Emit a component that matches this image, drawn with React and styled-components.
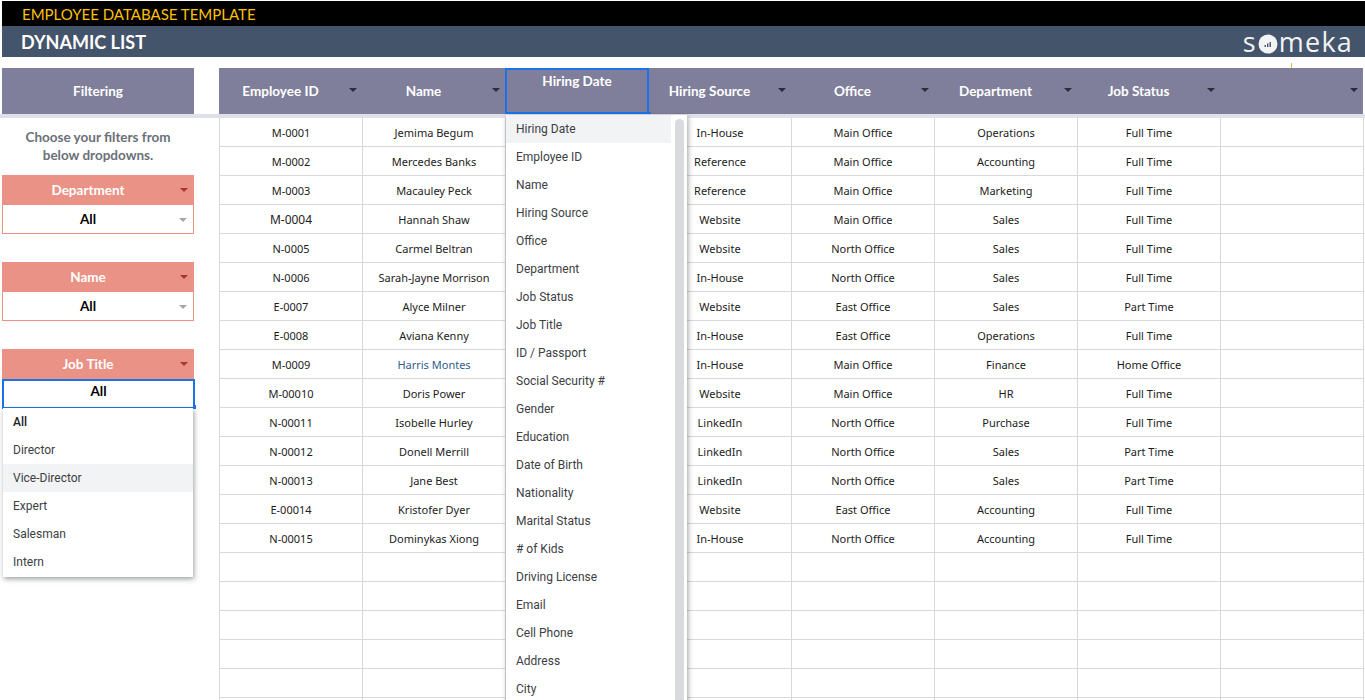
import React from "react";
import styled, { createGlobalStyle } from "styled-components";

const Global = createGlobalStyle`
  html, body { margin: 0; padding: 0; background: #fff; overflow: hidden; }
  #root { width: 1365px; height: 700px; overflow: hidden; }
`;

const Page = styled.div`
  position: relative;
  width: 1365px;
  height: 700px;
  overflow: hidden;
  padding-top: 1px;
  box-sizing: border-box;
  background: #fff;
  font-family: "Noto Sans", sans-serif;
`;
const TitleBar = styled.div`
  height: 25px;
  margin-left: 2px;
  padding-left: 20px;
  background: #000;
  color: #ffc000;
  font: 400 15px/27px Lato, sans-serif;
`;
const SubBar = styled.div`
  height: 31px;
  margin-left: 2px;
  padding: 0 12px 0 19px;
  background: #44546a;
  display: flex;
  align-items: center;
  justify-content: space-between;
`;
const SubTitle = styled.div`
  color: #fff;
  font: 700 18px/32px Lato, sans-serif;
`;
const Logo = styled.div`
  display: flex;
  align-items: center;
  color: #f2f3f5;
  font: 400 27px/30px "Open Sans", sans-serif;
  letter-spacing: 1.2px;
  svg { margin: 4px 1px 0 1px; }
`;
const Gap = styled.div`
  height: 11px;
  position: relative;
`;
const Tick = styled.i`
  position: absolute;
  left: 1291px;
  top: 6px;
  width: 1px;
  height: 5px;
  background: #f0b35a;
`;
const HeaderRow = styled.div`
  display: flex;
  height: 46px;
  padding-left: 2px;
  border-bottom: 4px solid #dfe0ea;
`;
const FilterHead = styled.div`
  width: 192px;
  margin-right: 25px;
  background: #7f7f9b;
  color: #fff;
  font: 700 13.5px/46px Lato, sans-serif;
  text-align: center;
`;
const Heads = styled.div`
  display: grid;
  grid-template-columns: repeat(8, 143px);
  width: 1144px;
  background: #7f7f9b;
`;
const Head = styled.div`
  position: relative;
  color: #fff;
  font: 700 13.5px/46px Lato, sans-serif;
  text-align: center;
  padding-right: 20px;
`;
const SelectedHead = styled.div`
  position: relative;
  box-sizing: border-box;
  color: #fff;
  font: 700 13.5px/20px Lato, sans-serif;
  text-align: center;
  border: 2px solid #1a73e8;
  margin-left: 0;
  padding-top: 1px;
  width: 144px;
  height: 46px;
`;
const Handle = styled.i`
  position: absolute;
  right: -4px;
  bottom: -2px;
  width: 3px;
  height: 2px;
  background: #1a73e8;
`;
const Arrow = styled.i`
  position: absolute;
  right: ${(p) => p.$right}px;
  top: ${(p) => p.$top}px;
  width: 0;
  height: 0;
  border-left: 4.5px solid transparent;
  border-right: 4.5px solid transparent;
  border-top: 4.5px solid ${(p) => p.$color};
`;
const Body = styled.div`
  display: flex;
  padding-left: 2px;
`;
const Sidebar = styled.aside`
  width: 192px;
  margin-right: 25px;
`;
const Intro = styled.div`
  height: 57px;
  box-sizing: border-box;
  padding-top: 10px;
  text-align: center;
  color: #6b7078;
  font: 700 13.5px/18px Lato, sans-serif;
`;
const FilterGroup = styled.div`
  margin-bottom: 28px;
  position: relative;
`;
const FilterLabel = styled.div`
  position: relative;
  height: 30px;
  background: #ea9285;
  color: #fff;
  font: 700 13.5px/30px Lato, sans-serif;
  text-align: center;
  padding-right: 20px;
`;
const FilterValue = styled.div`
  position: relative;
  height: 29px;
  box-sizing: border-box;
  border: 1px solid #ea9285;
  border-top: none;
  background: #fff;
  color: #000;
  font: 700 13.5px/28px Lato, sans-serif;
  text-align: center;
  padding-right: 20px;
`;
const FilterSelected = styled.div`
  position: relative;
  width: 193px;
  height: 30px;
  box-sizing: border-box;
  border: 2px solid #1a73e8;
  background: #fff;
  color: #000;
  font: 700 13.5px/21px Lato, sans-serif;
  text-align: center;
`;
const SmallHandle = styled.i`
  position: absolute;
  right: -3px;
  bottom: -2px;
  width: 3px;
  height: 4px;
  background: #1a73e8;
`;
const Table = styled.div`
  display: grid;
  grid-template-columns: repeat(8, 143px);
  grid-auto-rows: 29px;
  width: 1145px;
  border-left: 1px solid #d9d9d9;
  margin-left: 0;
`;
const Cell = styled.div`
  box-sizing: border-box;
  border-right: 1px solid #d9d9d9;
  border-bottom: 1px solid #d9d9d9;
  text-align: center;
  color: ${(p) => (p.$link ? "#2f5d8a" : "#1c1c1c")};
  font: 400 ${(p) => (p.$big ? 12 : 11)}px/29px "Noto Sans", sans-serif;
  white-space: nowrap;
  overflow: hidden;
`;
const Menu = styled.div`
  position: absolute;
  background: #fff;
  box-shadow: 1px 2px 5px rgba(60, 64, 67, 0.5);
  font: 400 12px/28px Roboto, sans-serif;
  color: #3c4043;
  overflow: hidden;
`;
const JobMenu = styled(Menu)`
  left: 3px;
  top: 408px;
  width: 190px;
  height: 169px;
`;
const ColumnMenu = styled(Menu)`
  left: 506px;
  top: 115px;
  width: 181px;
  height: 600px;
`;
const MenuItem = styled.div`
  height: 28px;
  padding-left: ${(p) => p.$pad}px;
  width: ${(p) => p.$w}px;
  box-sizing: border-box;
  background: ${(p) => (p.$hover ? "#f1f3f4" : "transparent")};
  font-weight: ${(p) => (p.$strong ? 500 : 400)};
  color: ${(p) => (p.$strong ? "#202124" : "#3c4043")};
`;
const ScrollBar = styled.div`
  position: absolute;
  left: 169px;
  top: 4px;
  width: 9px;
  height: 620px;
  border-radius: 5px;
  background: #d9dade;
`;

const rows = [
  ["M-0001", "Jemima Begum", "In-House", "Main Office", "Operations", "Full Time"],
  ["M-0002", "Mercedes Banks", "Reference", "Main Office", "Accounting", "Full Time"],
  ["M-0003", "Macauley Peck", "Reference", "Main Office", "Marketing", "Full Time"],
  ["M-0004", "Hannah Shaw", "Website", "Main Office", "Sales", "Full Time"],
  ["N-0005", "Carmel Beltran", "Website", "North Office", "Sales", "Full Time"],
  ["N-0006", "Sarah-Jayne Morrison", "In-House", "North Office", "Sales", "Full Time"],
  ["E-0007", "Alyce Milner", "Website", "East Office", "Sales", "Part Time"],
  ["E-0008", "Aviana Kenny", "In-House", "East Office", "Operations", "Full Time"],
  ["M-0009", "Harris Montes", "In-House", "Main Office", "Finance", "Home Office"],
  ["M-00010", "Doris Power", "Website", "Main Office", "HR", "Full Time"],
  ["N-00011", "Isobelle Hurley", "LinkedIn", "North Office", "Purchase", "Full Time"],
  ["N-00012", "Donell Merrill", "LinkedIn", "North Office", "Sales", "Part Time"],
  ["N-00013", "Jane Best", "LinkedIn", "North Office", "Sales", "Part Time"],
  ["E-00014", "Kristofer Dyer", "Website", "East Office", "Accounting", "Full Time"],
  ["N-00015", "Dominykas Xiong", "In-House", "North Office", "Accounting", "Full Time"],
  ...Array.from({ length: 6 }, () => ["", "", "", "", "", ""]),
];

const headers = ["Employee ID", "Name", null, "Hiring Source", "Office", "Department", "Job Status", ""];
const jobTitles = ["All", "Director", "Vice-Director", "Expert", "Salesman", "Intern"];
const columns = [
  "Hiring Date", "Employee ID", "Name", "Hiring Source", "Office", "Department", "Job Status",
  "Job Title", "ID / Passport", "Social Security #", "Gender", "Education", "Date of Birth",
  "Nationality", "Marital Status", "# of Kids", "Driving License", "Email", "Cell Phone", "Address", "City", "State",
];

const LogoO = () => (
  <svg width="20" height="20" viewBox="0 0 20 20">
    <circle cx="10" cy="10" r="9.5" fill="#f2f3f5" />
    <rect x="6.5" y="11" width="1.4" height="2" fill="#44546a" />
    <rect x="9" y="9.5" width="1.4" height="3.5" fill="#44546a" />
    <rect x="11.5" y="8" width="1.4" height="5" fill="#44546a" />
  </svg>
);

const Filter = ({ label }) => (
  <FilterGroup>
    <FilterLabel>
      {label}
      <Arrow $right={6} $top={13} $color="#a5382c" />
    </FilterLabel>
    <FilterValue>
      All
      <Arrow $right={6} $top={13} $color="#a6a6a6" />
    </FilterValue>
  </FilterGroup>
);

export default function App() {
  return (
    <Page>
      <Global />
      <TitleBar>EMPLOYEE DATABASE TEMPLATE</TitleBar>
      <SubBar>
        <SubTitle>DYNAMIC LIST</SubTitle>
        <Logo>
          s<LogoO />meka
        </Logo>
      </SubBar>
      <Gap>
        <Tick />
      </Gap>
      <HeaderRow>
        <FilterHead>Filtering</FilterHead>
        <Heads>
          {headers.map((h, i) =>
            h === null ? (
              <SelectedHead key={i}>
                Hiring Date
                <Handle />
              </SelectedHead>
            ) : (
              <Head key={i}>
                {h}
                <Arrow $right={5} $top={20} $color="#2b2b3a" />
              </Head>
            )
          )}
        </Heads>
      </HeaderRow>
      <Body>
        <Sidebar>
          <Intro>
            Choose your filters from
            <br />
            below dropdowns.
          </Intro>
          <Filter label="Department" />
          <Filter label="Name" />
          <FilterGroup>
            <FilterLabel>
              Job Title
              <Arrow $right={6} $top={13} $color="#a5382c" />
            </FilterLabel>
            <FilterSelected>
              All
              <SmallHandle />
            </FilterSelected>
          </FilterGroup>
        </Sidebar>
        <Table>
          {rows.flatMap((r, i) => {
            const cells = [r[0], r[1], "", r[2], r[3], r[4], r[5], ""];
            return cells.map((c, j) => (
              <Cell key={`${i}-${j}`} $link={c === "Harris Montes"} $big={c === "M-0004"}>
                {c}
              </Cell>
            ));
          })}
        </Table>
      </Body>
      <JobMenu>
        {jobTitles.map((t, i) => (
          <MenuItem key={t} $pad={10} $strong={i === 0} $hover={i === 2}>
            {t}
          </MenuItem>
        ))}
      </JobMenu>
      <ColumnMenu>
        {columns.map((t, i) => (
          <MenuItem key={t} $pad={10} $w={165} $hover={i === 0}>
            {t}
          </MenuItem>
        ))}
        <ScrollBar />
      </ColumnMenu>
    </Page>
  );
}
